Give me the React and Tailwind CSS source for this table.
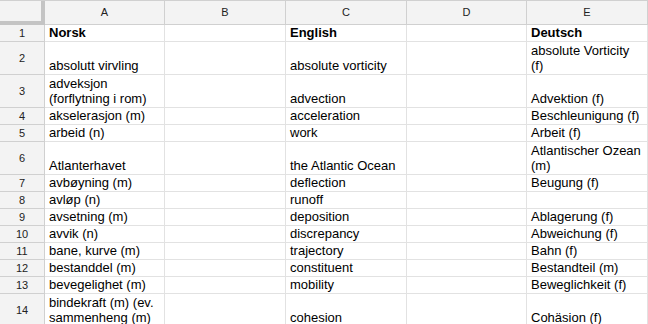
const rows = [
  { n: 1, h: 'h-[17px]', bold: true, a: 'Norsk', c: 'English', e: 'Deutsch' },
  { n: 2, h: 'h-[33px]', a: 'absolutt virvling', c: 'absolute vorticity', e: 'absolute Vorticity (f)' },
  { n: 3, h: 'h-[33px]', a: 'adveksjon (forflytning i rom)', c: 'advection', e: 'Advektion (f)' },
  { n: 4, h: 'h-[17px]', a: 'akselerasjon (m)', c: 'acceleration', e: 'Beschleunigung (f)' },
  { n: 5, h: 'h-[17px]', a: 'arbeid (n)', c: 'work', e: 'Arbeit (f)' },
  { n: 6, h: 'h-[33px]', a: 'Atlanterhavet', c: 'the Atlantic Ocean', e: 'Atlantischer Ozean (m)' },
  { n: 7, h: 'h-[17px]', a: 'avbøyning (m)', c: 'deflection', e: 'Beugung (f)' },
  { n: 8, h: 'h-[17px]', a: 'avløp (n)', c: 'runoff', e: '' },
  { n: 9, h: 'h-[17px]', a: 'avsetning (m)', c: 'deposition', e: 'Ablagerung (f)' },
  { n: 10, h: 'h-[17px]', a: 'avvik (n)', c: 'discrepancy', e: 'Abweichung (f)' },
  { n: 11, h: 'h-[17px]', a: 'bane, kurve (m)', c: 'trajectory', e: 'Bahn (f)' },
  { n: 12, h: 'h-[17px]', a: 'bestanddel (m)', c: 'constituent', e: 'Bestandteil (m)' },
  { n: 13, h: 'h-[17px]', a: 'bevegelighet (m)', c: 'mobility', e: 'Beweglichkeit (f)' },
  { n: 14, h: 'h-[33px]', a: 'bindekraft (m) (ev. sammenheng (m)', c: 'cohesion', e: 'Cohäsion (f)' },
];

const widths = ['w-[120px]', 'w-[121px]', 'w-[121px]', 'w-[120px]', 'w-[121px]'];
const letters = ['A', 'B', 'C', 'D', 'E'];

const Cell = ({ w, bold, children }) => (
  <div className={`${w} shrink-0 flex flex-col justify-end border-r border-b border-[#e2e2e2] pl-[4px] pr-[2px] pb-[1px] text-[13px] leading-[15px] text-black ${bold ? 'font-bold' : ''}`}>
    <div className="break-words">{children}</div>
  </div>
);

export default function App() {
  return (
    <div className="w-[648px] h-[324px] overflow-hidden bg-white font-['Liberation_Sans',Arial,sans-serif]">
      {/* column header */}
      <div className="flex h-[25px] border-t border-[#d0d0d0]">
        <div className="w-[45px] shrink-0 bg-[#f3f3f3] border-r-[4px] border-b-[4px] border-[#c4c4c4]" />
        {letters.map((l, i) => (
          <div
            key={l}
            className={`${widths[i]} shrink-0 flex items-center justify-center bg-[#f3f3f3] border-r border-b border-[#d0d0d0] text-[11px] text-[#222]`}
          >
            {l}
          </div>
        ))}
      </div>

      {rows.map((r) => (
        <div key={r.n} className={`flex ${r.h}`}>
          <div className="w-[45px] shrink-0 flex items-center justify-center bg-[#f3f3f3] border-r border-b border-[#d0d0d0] text-[11px] text-[#222]">
            {r.n}
          </div>
          <Cell w={widths[0]} bold={r.bold}>{r.a}</Cell>
          <Cell w={widths[1]} />
          <Cell w={widths[2]} bold={r.bold}>{r.c}</Cell>
          <Cell w={widths[3]} />
          <Cell w={widths[4]} bold={r.bold}>{r.e}</Cell>
        </div>
      ))}
    </div>
  );
}
